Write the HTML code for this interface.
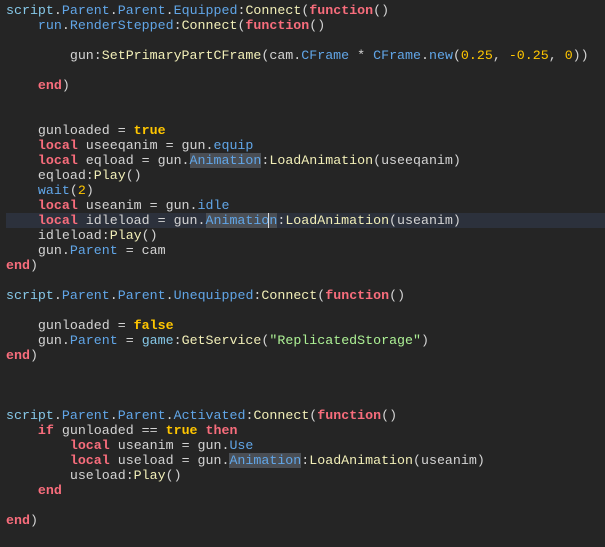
<!DOCTYPE html><html><head><style>
body{margin:0;background:#252525;width:605px;height:547px;overflow:hidden}
pre{margin:0;padding:3px 0 0 6px;font-family:"Liberation Mono",monospace;font-size:13.3px;line-height:15px;color:#d4d4d4;position:relative}
.k{color:#f86d7c;font-weight:bold}.b{color:#ffc600;font-weight:bold}.n{color:#ffc600}
.p{color:#61a6e8}.s{color:#86c8e8}.m{color:#f2efb8}.g{color:#adf195}
.h{background:#4a4e54}
.hl{position:absolute;left:6px;top:213px;width:599px;height:15px;background:#2c313c}
.c{border-left:1px solid #ddd;margin-left:-1px}
</style></head><body><pre><div class="hl"></div><span style="position:relative"><span class="s">script</span>.<span class="p">Parent</span>.<span class="p">Parent</span>.<span class="p">Equipped</span>:<span class="m">Connect</span>(<span class="k">function</span>()
    <span class="p">run</span>.<span class="p">RenderStepped</span>:<span class="m">Connect</span>(<span class="k">function</span>()

        gun:<span class="m">SetPrimaryPartCFrame</span>(cam.<span class="p">CFrame</span> * <span class="p">CFrame</span>.<span class="p">new</span>(<span class="n">0.25</span>, <span class="n">-0.25</span>, <span class="n">0</span>))

    <span class="k">end</span>)


    gunloaded = <span class="b">true</span>
    <span class="k">local</span> useeqanim = gun.<span class="p">equip</span>
    <span class="k">local</span> eqload = gun.<span class="p h">Animation</span>:<span class="m">LoadAnimation</span>(useeqanim)
    eqload:<span class="m">Play</span>()
    <span class="p">wait</span>(<span class="n">2</span>)
    <span class="k">local</span> useanim = gun.<span class="p">idle</span>
    <span class="k">local</span> idleload = gun.<span class="p h">Animatio</span><span class="p h c">n</span>:<span class="m">LoadAnimation</span>(useanim)
    idleload:<span class="m">Play</span>()
    gun.<span class="p">Parent</span> = cam
<span class="k">end</span>)

<span class="s">script</span>.<span class="p">Parent</span>.<span class="p">Parent</span>.<span class="p">Unequipped</span>:<span class="m">Connect</span>(<span class="k">function</span>()

    gunloaded = <span class="b">false</span>
    gun.<span class="p">Parent</span> = <span class="s">game</span>:<span class="m">GetService</span>(<span class="g">"ReplicatedStorage"</span>)
<span class="k">end</span>)



<span class="s">script</span>.<span class="p">Parent</span>.<span class="p">Parent</span>.<span class="p">Activated</span>:<span class="m">Connect</span>(<span class="k">function</span>()
    <span class="k">if</span> gunloaded == <span class="b">true</span> <span class="k">then</span>
        <span class="k">local</span> useanim = gun.<span class="p">Use</span>
        <span class="k">local</span> useload = gun.<span class="p h">Animation</span>:<span class="m">LoadAnimation</span>(useanim)
        useload:<span class="m">Play</span>()
    <span class="k">end</span>

<span class="k">end</span>)</span></pre></body></html>
